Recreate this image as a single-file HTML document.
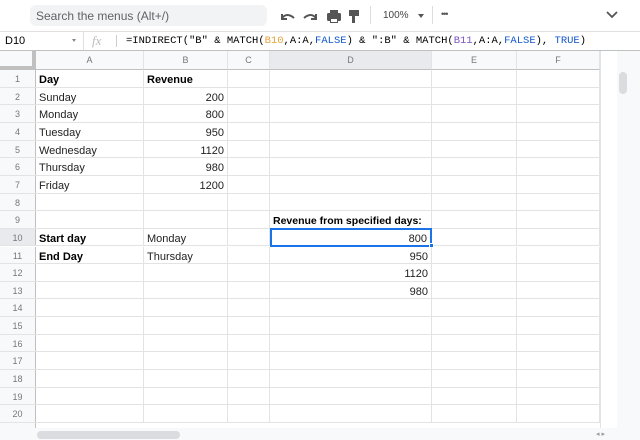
<!DOCTYPE html>
<html><head><meta charset="utf-8"><style>
*{margin:0;padding:0;box-sizing:border-box}
body{width:640px;height:440px;overflow:hidden;background:#fff;font-family:"Liberation Sans",Arial,sans-serif;position:relative}
.abs{position:absolute}
.search{left:30px;top:5px;width:237px;height:21px;background:#f1f3f4;border-radius:6px;font-size:12px;color:#5f6368;padding:4px 6px}
.fbar{left:0;top:31px;width:640px;height:20px;border-top:1px solid #e0e0e0;border-bottom:1px solid #c0c0c0;font-size:11px}
.mono{font-family:"Liberation Mono",monospace;font-size:10.5px;color:#000}
.hdr{top:51px;height:19px;background:#f8f9fa;border-bottom:1px solid #c0c0c0;border-right:1px solid #e2e3e3;font-size:9px;color:#777;text-align:center;line-height:19px}
.row{position:absolute;left:0;height:17.65px;width:600px;border-bottom:1px solid #e2e3e3}
.rn{position:absolute;left:0;width:36px;height:100%;background:#f8f9fa;border-right:1px solid #c0c0c0;font-size:9px;color:#777;text-align:center;line-height:19px}
.c{position:absolute;top:0;height:100%;border-right:1px solid #e2e3e3;font-size:11px;line-height:20px;padding:0 3px;white-space:nowrap;color:#222}
.b{font-weight:bold;color:#000}.r{text-align:right}
</style></head><body>
<div class="abs search">Search the menus (Alt+/)</div>
<svg class="abs" style="left:278px;top:6px" width="180" height="20" viewBox="0 0 180 20">
 <path d="M4 8 L4 13 L9 13 M4 12 Q9 6 16 12" stroke="#555" stroke-width="2" fill="none"/>
 <path d="M38 8 L38 13 L33 13 M38 12 Q33 6 26 12" stroke="#555" stroke-width="2" fill="none"/>
 <rect x="49" y="7" width="14" height="8" rx="1.5" fill="#555"/><rect x="52" y="4" width="8" height="4" fill="#555"/><rect x="52" y="12" width="8" height="5" fill="#555"/><rect x="53" y="13" width="6" height="3" fill="#fff"/>
 <rect x="71" y="4" width="10" height="6" fill="#555"/><rect x="74" y="9" width="3" height="8" fill="#555"/>
</svg>
<div class="abs" style="left:370px;top:6px;width:1px;height:18px;background:#ddd"></div>
<div class="abs" style="left:383px;top:10px;font-size:10px;color:#444">100%</div>
<div class="abs" style="left:418px;top:14px;border:3px solid transparent;border-top:4px solid #555"></div>
<div class="abs" style="left:432px;top:6px;width:1px;height:18px;background:#ddd"></div>
<div class="abs" style="left:441px;top:9px;font-size:9px;color:#555;letter-spacing:-1px">•••</div>
<svg class="abs" style="left:605px;top:10px" width="14" height="10"><path d="M2 2 L7 7 L12 2" stroke="#555" stroke-width="1.8" fill="none"/></svg>
<div class="abs fbar">
 <span class="abs" style="left:5px;top:3px;font-size:11px">D10</span>
 <span class="abs" style="left:72px;top:7px;border:2px solid transparent;border-top:3px solid #888"></span>
 <span class="abs" style="left:83px;top:0;width:1px;height:18px;background:#e0e0e0"></span>
 <span class="abs" style="left:92px;top:1px;font-style:italic;font-family:'Liberation Serif',serif;font-size:13px;color:#bbb">fx</span>
 <span class="abs" style="left:116px;top:3px;width:1px;height:12px;background:#ccc"></span>
 <span class="abs mono" style="left:126px;top:3px">=INDIRECT("B" &amp; MATCH(<span style="color:#e6a23c">B10</span>,A:A,<span style="color:#1155cc">FALSE</span>) &amp; ":B" &amp; MATCH(<span style="color:#7e57c2">B11</span>,A:A,<span style="color:#1155cc">FALSE</span>), <span style="color:#1155cc">TRUE</span>)</span>
</div>
<div class="abs hdr" style="left:0;width:36px;background:#f8f9fa;border-right:4px solid #c0c0c0;border-bottom:4px solid #c0c0c0"></div>
<div class="abs hdr" style="left:36px;width:108px">A</div>
<div class="abs hdr" style="left:144px;width:84px">B</div>
<div class="abs hdr" style="left:228px;width:42px">C</div>
<div class="abs hdr" style="left:270px;width:162px;background:#e8eaed">D</div>
<div class="abs hdr" style="left:432px;width:85px">E</div>
<div class="abs hdr" style="left:517px;width:83px">F</div>
<div class="abs" style="left:600px;top:51px;width:17px;height:377px;background:#fff;border-left:1px solid #e2e3e3"></div>
<div class="abs" style="left:617px;top:51px;width:23px;height:389px;background:#f8f9fa"></div>
<div class="abs" style="left:619px;top:72px;width:8px;height:22px;background:#dadce0;border-radius:4px"></div>
<div id="g" class="abs" style="left:0;top:70px;width:600px;height:358px;overflow:hidden">
<div class="row" style="top:0"><div class="rn">1</div><div class="c b" style="left:36px;width:108px">Day</div><div class="c b" style="left:144px;width:84px">Revenue</div><div class="c" style="left:228px;width:42px"></div><div class="c" style="left:270px;width:162px"></div><div class="c" style="left:432px;width:85px"></div><div class="c" style="left:517px;width:83px"></div></div>
<div class="row" style="top:17.65px"><div class="rn">2</div><div class="c" style="left:36px;width:108px">Sunday</div><div class="c r" style="left:144px;width:84px">200</div><div class="c" style="left:228px;width:42px"></div><div class="c" style="left:270px;width:162px"></div><div class="c" style="left:432px;width:85px"></div><div class="c" style="left:517px;width:83px"></div></div>
<div class="row" style="top:35.3px"><div class="rn">3</div><div class="c" style="left:36px;width:108px">Monday</div><div class="c r" style="left:144px;width:84px">800</div><div class="c" style="left:228px;width:42px"></div><div class="c" style="left:270px;width:162px"></div><div class="c" style="left:432px;width:85px"></div><div class="c" style="left:517px;width:83px"></div></div>
<div class="row" style="top:52.95px"><div class="rn">4</div><div class="c" style="left:36px;width:108px">Tuesday</div><div class="c r" style="left:144px;width:84px">950</div><div class="c" style="left:228px;width:42px"></div><div class="c" style="left:270px;width:162px"></div><div class="c" style="left:432px;width:85px"></div><div class="c" style="left:517px;width:83px"></div></div>
<div class="row" style="top:70.6px"><div class="rn">5</div><div class="c" style="left:36px;width:108px">Wednesday</div><div class="c r" style="left:144px;width:84px">1120</div><div class="c" style="left:228px;width:42px"></div><div class="c" style="left:270px;width:162px"></div><div class="c" style="left:432px;width:85px"></div><div class="c" style="left:517px;width:83px"></div></div>
<div class="row" style="top:88.25px"><div class="rn">6</div><div class="c" style="left:36px;width:108px">Thursday</div><div class="c r" style="left:144px;width:84px">980</div><div class="c" style="left:228px;width:42px"></div><div class="c" style="left:270px;width:162px"></div><div class="c" style="left:432px;width:85px"></div><div class="c" style="left:517px;width:83px"></div></div>
<div class="row" style="top:105.9px"><div class="rn">7</div><div class="c" style="left:36px;width:108px">Friday</div><div class="c r" style="left:144px;width:84px">1200</div><div class="c" style="left:228px;width:42px"></div><div class="c" style="left:270px;width:162px"></div><div class="c" style="left:432px;width:85px"></div><div class="c" style="left:517px;width:83px"></div></div>
<div class="row" style="top:123.55px"><div class="rn">8</div><div class="c" style="left:36px;width:108px"></div><div class="c" style="left:144px;width:84px"></div><div class="c" style="left:228px;width:42px"></div><div class="c" style="left:270px;width:162px"></div><div class="c" style="left:432px;width:85px"></div><div class="c" style="left:517px;width:83px"></div></div>
<div class="row" style="top:141.2px"><div class="rn">9</div><div class="c" style="left:36px;width:108px"></div><div class="c" style="left:144px;width:84px"></div><div class="c" style="left:228px;width:42px"></div><div class="c b" style="left:270px;width:162px;font-size:10.5px">Revenue from specified days:</div><div class="c" style="left:432px;width:85px"></div><div class="c" style="left:517px;width:83px"></div></div>
<div class="row" style="top:158.85px"><div class="rn" style="background:#e8eaed">10</div><div class="c b" style="left:36px;width:108px">Start day</div><div class="c" style="left:144px;width:84px">Monday</div><div class="c" style="left:228px;width:42px"></div><div class="c r" style="left:270px;width:162px;border:2px solid #1a73e8;top:-1px;height:19px;line-height:19px">800</div><div class="c" style="left:432px;width:85px"></div><div class="c" style="left:517px;width:83px"></div><div class="abs" style="left:429px;top:14px;width:5px;height:5px;background:#1a73e8;border:1px solid #fff"></div></div>
<div class="row" style="top:176.5px"><div class="rn">11</div><div class="c b" style="left:36px;width:108px">End Day</div><div class="c" style="left:144px;width:84px">Thursday</div><div class="c" style="left:228px;width:42px"></div><div class="c r" style="left:270px;width:162px">950</div><div class="c" style="left:432px;width:85px"></div><div class="c" style="left:517px;width:83px"></div></div>
<div class="row" style="top:194.15px"><div class="rn">12</div><div class="c" style="left:36px;width:108px"></div><div class="c" style="left:144px;width:84px"></div><div class="c" style="left:228px;width:42px"></div><div class="c r" style="left:270px;width:162px">1120</div><div class="c" style="left:432px;width:85px"></div><div class="c" style="left:517px;width:83px"></div></div>
<div class="row" style="top:211.8px"><div class="rn">13</div><div class="c" style="left:36px;width:108px"></div><div class="c" style="left:144px;width:84px"></div><div class="c" style="left:228px;width:42px"></div><div class="c r" style="left:270px;width:162px">980</div><div class="c" style="left:432px;width:85px"></div><div class="c" style="left:517px;width:83px"></div></div>
<div class="row" style="top:229.45px"><div class="rn">14</div><div class="c" style="left:36px;width:108px"></div><div class="c" style="left:144px;width:84px"></div><div class="c" style="left:228px;width:42px"></div><div class="c" style="left:270px;width:162px"></div><div class="c" style="left:432px;width:85px"></div><div class="c" style="left:517px;width:83px"></div></div>
<div class="row" style="top:247.1px"><div class="rn">15</div><div class="c" style="left:36px;width:108px"></div><div class="c" style="left:144px;width:84px"></div><div class="c" style="left:228px;width:42px"></div><div class="c" style="left:270px;width:162px"></div><div class="c" style="left:432px;width:85px"></div><div class="c" style="left:517px;width:83px"></div></div>
<div class="row" style="top:264.75px"><div class="rn">16</div><div class="c" style="left:36px;width:108px"></div><div class="c" style="left:144px;width:84px"></div><div class="c" style="left:228px;width:42px"></div><div class="c" style="left:270px;width:162px"></div><div class="c" style="left:432px;width:85px"></div><div class="c" style="left:517px;width:83px"></div></div>
<div class="row" style="top:282.4px"><div class="rn">17</div><div class="c" style="left:36px;width:108px"></div><div class="c" style="left:144px;width:84px"></div><div class="c" style="left:228px;width:42px"></div><div class="c" style="left:270px;width:162px"></div><div class="c" style="left:432px;width:85px"></div><div class="c" style="left:517px;width:83px"></div></div>
<div class="row" style="top:300.05px"><div class="rn">18</div><div class="c" style="left:36px;width:108px"></div><div class="c" style="left:144px;width:84px"></div><div class="c" style="left:228px;width:42px"></div><div class="c" style="left:270px;width:162px"></div><div class="c" style="left:432px;width:85px"></div><div class="c" style="left:517px;width:83px"></div></div>
<div class="row" style="top:317.7px"><div class="rn">19</div><div class="c" style="left:36px;width:108px"></div><div class="c" style="left:144px;width:84px"></div><div class="c" style="left:228px;width:42px"></div><div class="c" style="left:270px;width:162px"></div><div class="c" style="left:432px;width:85px"></div><div class="c" style="left:517px;width:83px"></div></div>
<div class="row" style="top:335.35px"><div class="rn">20</div><div class="c" style="left:36px;width:108px"></div><div class="c" style="left:144px;width:84px"></div><div class="c" style="left:228px;width:42px"></div><div class="c" style="left:270px;width:162px"></div><div class="c" style="left:432px;width:85px"></div><div class="c" style="left:517px;width:83px"></div></div>
<div class="row" style="top:353px"><div class="rn">21</div></div>
</div>
<div class="abs" style="left:0;top:428px;width:617px;height:12px;background:#f8f9fa"></div>
<div class="abs" style="left:37px;top:431px;width:143px;height:8px;background:#dadce0;border-radius:4px"></div>
<div class="abs" style="left:596px;top:430px;font-size:7px;color:#999">◂ ▸</div>
</body></html>
